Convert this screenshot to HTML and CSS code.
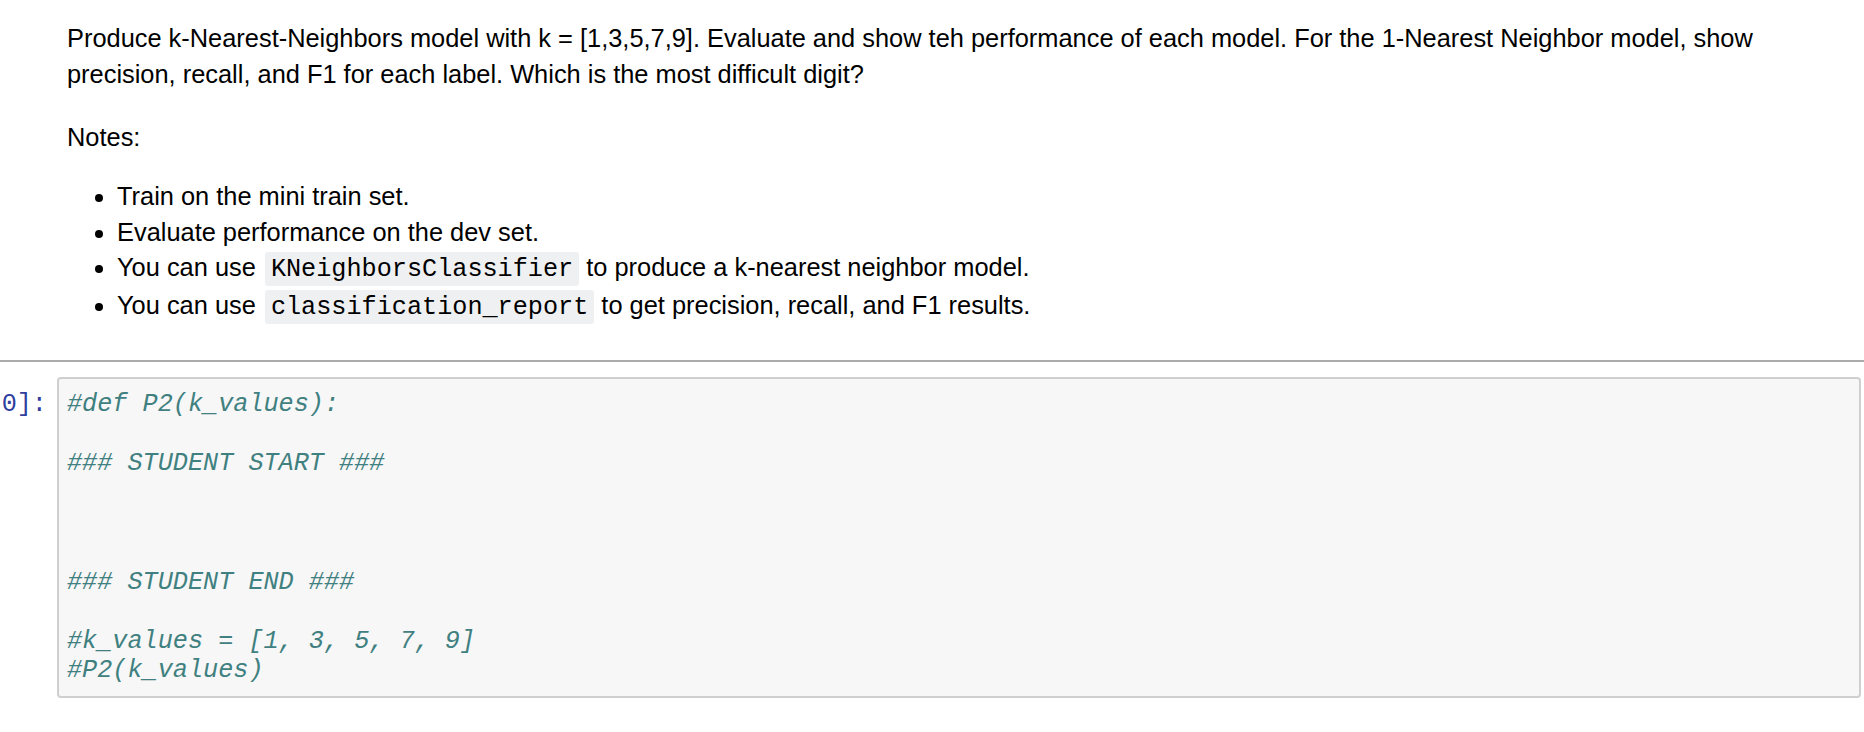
FILE: index.html
```html
<!DOCTYPE html>
<html>
<head>
<meta charset="utf-8">
<link rel="stylesheet" href="styles.css">
</head>
<body>
<div class="md-cell">
  <p class="md-p">Produce k-Nearest-Neighbors model with k = [1,3,5,7,9]. Evaluate and show teh performance of each model. For the 1-Nearest Neighbor model, show precision, recall, and F1 for each label. Which is the most difficult digit?</p>
  <p class="md-p md-gap">Notes:</p>
  <ul class="md-list">
    <li>Train on the mini train set.</li>
    <li>Evaluate performance on the dev set.</li>
    <li>You can use <code class="inline-code">KNeighborsClassifier</code> to produce a k-nearest neighbor model.</li>
    <li>You can use <code class="inline-code">classification_report</code> to get precision, recall, and F1 results.</li>
  </ul>
</div>
<div class="code-cell">
  <div class="prompt">0]:</div>
  <div class="input-area"><pre class="code">#def P2(k_values):

### STUDENT START ###



### STUDENT END ###

#k_values = [1, 3, 5, 7, 9]
#P2(k_values)</pre></div>
</div>
</body>
</html>
```
FILE: styles.css
```css
html, body {
  margin: 0;
  padding: 0;
  background: #ffffff;
}

body {
  width: 1864px;
  height: 732px;
  overflow: hidden;
  font-family: "Liberation Sans", Arial, Helvetica, sans-serif;
  color: #000;
}

.md-cell {
  padding: 20px 14px 0 67px;
  height: 362px;
  box-sizing: border-box;
  border-bottom: 2px solid #ababab;
  font-size: 25.4px;
  line-height: 36px;
}

.md-p {
  margin: 0;
}

.md-gap {
  margin-top: 27px;
}

.md-list {
  margin: 24px 0 0 0;
  padding-left: 50px;
}

.md-list li {
  line-height: 35.6px;
}

.inline-code {
  font-family: "Liberation Mono", "Courier New", monospace;
  font-size: 25.2px;
  background: #eff0f1;
  padding: 3px 6px 2px 6px;
  margin-left: 2px;
  border-radius: 3px;
}

.code-cell {
  display: flex;
  padding-top: 15px;
}

.prompt {
  width: 57px;
  flex: 0 0 57px;
  box-sizing: border-box;
  padding: 13px 10px 0 0;
  text-align: right;
  font-family: "Liberation Mono", "Courier New", monospace;
  font-size: 25.2px;
  line-height: 29.6px;
  color: #303f9f;
  white-space: nowrap;
  overflow: hidden;
}

.input-area {
  width: 1804px;
  height: 321px;
  box-sizing: border-box;
  background: #f7f7f7;
  border: 2px solid #cfcfcf;
  border-radius: 4px;
}

.code {
  margin: 0;
  padding: 11px 8px 10px 8px;
  font-family: "Liberation Mono", "Courier New", monospace;
  font-size: 25.2px;
  line-height: 29.6px;
  font-style: italic;
  color: #408080;
}
```
